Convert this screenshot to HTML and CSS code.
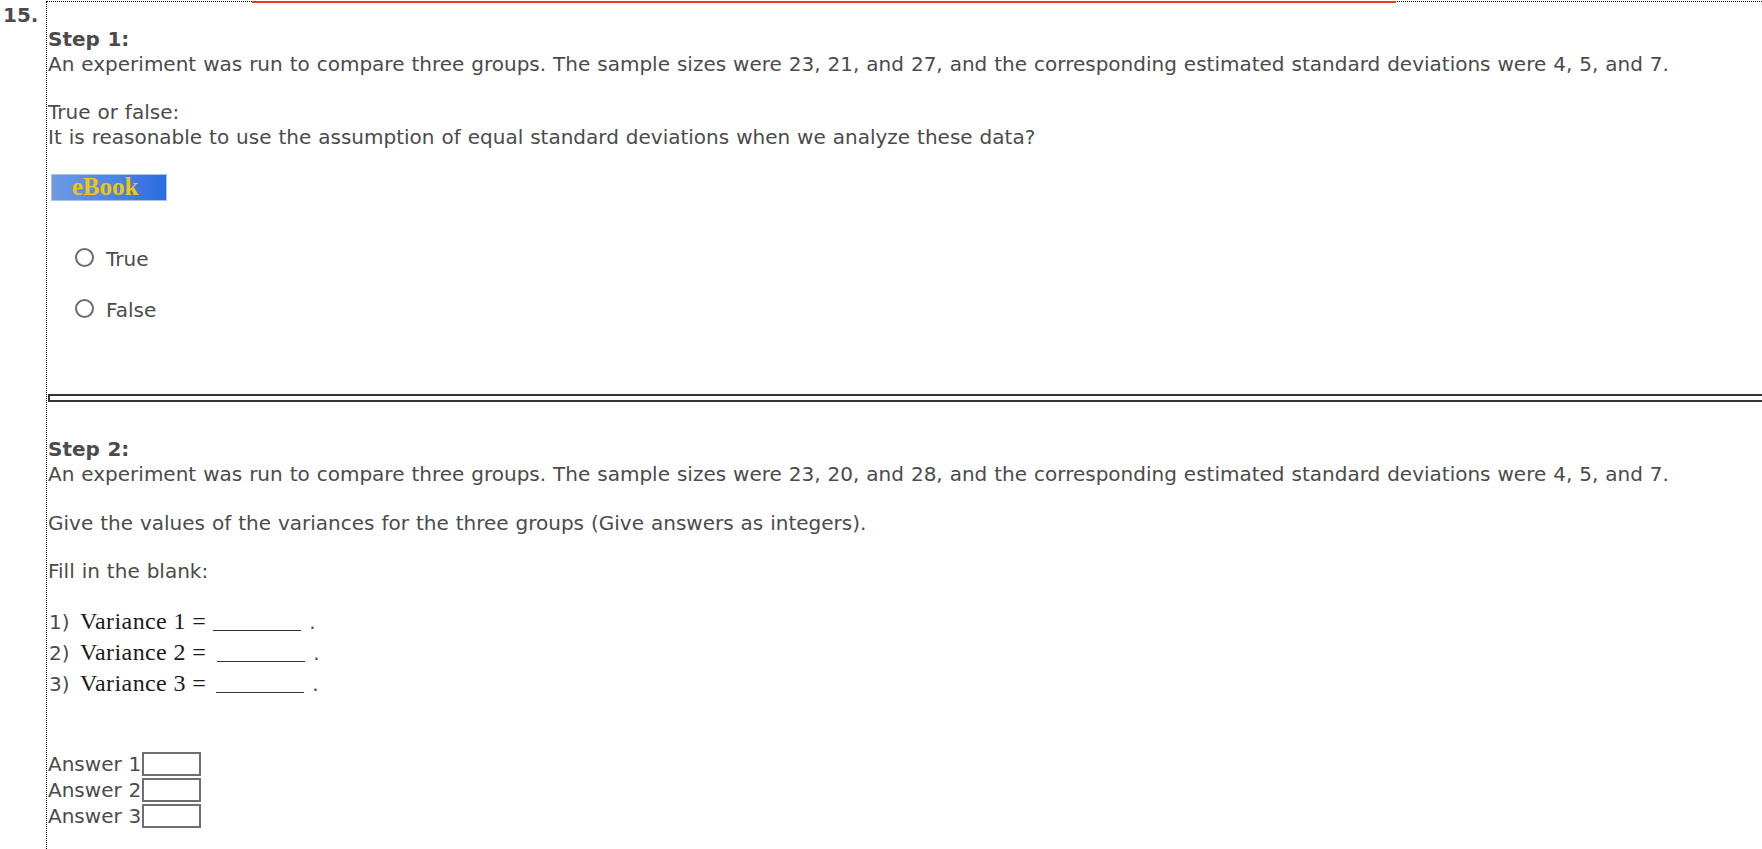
FILE: index.html
```html
<!DOCTYPE html>
<html lang="en">
<head>
<meta charset="utf-8">
<title>Question 15</title>
<link rel="stylesheet" href="styles.css">
</head>
<body>
<div class="question">
  <div class="qnum">15.</div>
  <div class="qbody">
    <div class="progress"></div>

    <section class="step step-one">
      <div class="line bold">Step 1:</div>
      <div class="line">An experiment was run to compare three groups. The sample sizes were 23, 21, and 27, and the corresponding estimated standard deviations were 4, 5, and 7.</div>
      <div class="line gap-a">True or false:</div>
      <div class="line">It is reasonable to use the assumption of equal standard deviations when we analyze these data?</div>
      <div class="ebook"><span>eBook</span></div>
      <label class="radio-row first"><span class="radio"></span><span class="radio-label">True</span></label>
      <label class="radio-row second"><span class="radio"></span><span class="radio-label">False</span></label>
    </section>

    <div class="divider"></div>

    <section class="step step-two">
      <div class="line bold">Step 2:</div>
      <div class="line">An experiment was run to compare three groups. The sample sizes were 23, 20, and 28, and the corresponding estimated standard deviations were 4, 5, and 7.</div>
      <div class="line gap-b">Give the values of the variances for the three groups (Give answers as integers).</div>
      <div class="line gap-c">Fill in the blank:</div>
      <div class="blanks">
        <div class="blank-row"><span class="num">1)</span><span class="expr">Variance 1 =</span><span class="blank b1"></span><span class="dot">.</span></div>
        <div class="blank-row"><span class="num">2)</span><span class="expr">Variance 2 =</span><span class="blank b2"></span><span class="dot">.</span></div>
        <div class="blank-row"><span class="num">3)</span><span class="expr">Variance 3 =</span><span class="blank b3"></span><span class="dot">.</span></div>
      </div>
      <div class="answers">
        <div class="answer-row"><span class="answer-label">Answer 1</span><span class="answer-box"></span></div>
        <div class="answer-row"><span class="answer-label">Answer 2</span><span class="answer-box"></span></div>
        <div class="answer-row"><span class="answer-label">Answer 3</span><span class="answer-box"></span></div>
      </div>
    </section>
  </div>
</div>
</body>
</html>
```

FILE: styles.css
```css
html, body {
  margin: 0;
  padding: 0;
  overflow: hidden;
  background: #ffffff;
}

body {
  font-family: "DejaVu Sans", Verdana, sans-serif;
  font-size: 20px;
  word-spacing: 0.6px;
  color: #4b4b4b;
}

.question {
  display: flex;
  align-items: stretch;
  min-height: 100vh;
  padding-top: 1px;
  box-sizing: border-box;
}

.qnum {
  width: 46px;
  flex: none;
  font-weight: bold;
  font-size: 20px;
  line-height: 28px;
  padding-left: 3px;
  box-sizing: border-box;
}

.qbody {
  position: relative;
  flex: 1;
  border-top: 1px dotted #000;
  border-left: 1px dotted #000;
  padding-left: 1px;
  padding-top: 25px;
  margin-right: -20px;
}

.progress {
  position: absolute;
  top: -1px;
  left: 205px;
  width: 1144px;
  height: 2px;
  background: #e83a1c;
}

.line {
  line-height: 25px;
  white-space: nowrap;
}

.bold {
  font-weight: bold;
}

.gap-a { margin-top: 23px; }
.gap-b { margin-top: 24px; }
.gap-c { margin-top: 23px; }

.ebook {
  margin-top: 24px;
  margin-left: 3px;
  width: 116px;
  height: 27px;
  box-sizing: border-box;
  border: 1px solid #a8c2ee;
  background: linear-gradient(to right, #6d9be3 0%, #4f86e2 50%, #2c6ce0 100%);
  display: flex;
  justify-content: center;
  align-items: center;
}

.ebook span {
  font-family: "Liberation Serif", "Times New Roman", serif;
  font-weight: bold;
  font-size: 25px;
  line-height: 24px;
  word-spacing: 0;
  color: #f0c410;
  margin-top: -2px;
  margin-left: -8px;
}

.radio-row {
  display: flex;
  align-items: center;
  height: 25px;
  margin-left: 27px;
}

.radio-row.first { margin-top: 44px; }
.radio-row.second { margin-top: 26px; }

.radio {
  width: 19px;
  height: 19px;
  box-sizing: border-box;
  border: 2px solid #6d6d6d;
  border-radius: 50%;
  background: #fff;
  flex: none;
}

.radio-label {
  margin-left: 12px;
  margin-top: 3px;
}

.divider {
  margin-top: 73px;
  margin-left: 0;
  height: 8px;
  box-sizing: border-box;
  border: 2px solid #333;
  border-right: none;
  background: #fff;
}

.step-two {
  padding-top: 35px;
}

.blanks {
  margin-top: 22px;
}

.blank-row {
  display: flex;
  align-items: baseline;
  height: 31px;
  line-height: 31px;
  padding-left: 1px;
}

.num {
  width: 31px;
  flex: none;
}

.expr {
  font-family: "Liberation Serif", "Times New Roman", serif;
  font-size: 24px;
  color: #1a1a1a;
  word-spacing: 0;
  letter-spacing: 0.4px;
  white-space: nowrap;
}

.blank {
  display: inline-block;
  width: 88px;
  height: 1px;
  background: #333;
  margin-left: 7px;
  align-self: flex-end;
  margin-bottom: 6px;
}

.b2 { margin-left: 11px; }
.b3 { margin-left: 10px; }

.dot {
  margin-left: 8px;
}

.answers {
  margin-top: 52px;
}

.answer-row {
  display: flex;
  align-items: center;
  height: 26px;
}

.answer-label {
  white-space: nowrap;
}

.answer-box {
  width: 59px;
  height: 24px;
  box-sizing: border-box;
  border: 2px solid #6f6f6f;
  background: #fff;
  margin-left: 1px;
}
```
